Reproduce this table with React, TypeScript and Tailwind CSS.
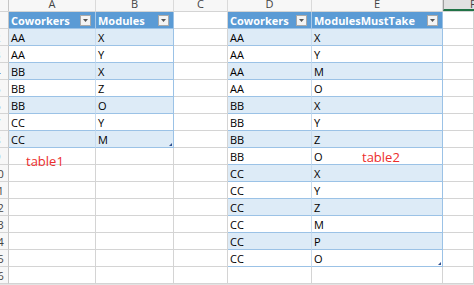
type Kind = 'hdr' | 'band' | 'plain' | 'empty';

interface Cell {
  text?: string;
  kind: Kind;
  last?: boolean; // right edge of a table
  corner?: boolean; // resize handle
}

const cols = ['A', 'B', 'C', 'D', 'E', 'F'];
const widths = ['w-[87px]', 'w-[78px]', 'w-[54px]', 'w-[84px]', 'w-[131px]', 'flex-1'];

const table1: [string, string][] = [
  ['AA', 'X'],
  ['AA', 'Y'],
  ['BB', 'X'],
  ['BB', 'Z'],
  ['BB', 'O'],
  ['CC', 'Y'],
  ['CC', 'M'],
];

const table2: [string, string][] = [
  ['AA', 'X'],
  ['AA', 'Y'],
  ['AA', 'M'],
  ['AA', 'O'],
  ['BB', 'X'],
  ['BB', 'Y'],
  ['BB', 'Z'],
  ['BB', 'O'],
  ['CC', 'X'],
  ['CC', 'Y'],
  ['CC', 'Z'],
  ['CC', 'M'],
  ['CC', 'P'],
  ['CC', 'O'],
];

function tableCells(rows: [string, string][], head: [string, string], r: number): Cell[] {
  if (r === 0) {
    return [
      { text: head[0], kind: 'hdr' },
      { text: head[1], kind: 'hdr', last: true },
    ];
  }
  const row = rows[r - 1];
  if (!row) return [{ kind: 'empty' }, { kind: 'empty' }];
  const kind: Kind = r % 2 === 1 ? 'band' : 'plain';
  const end = r === rows.length;
  return [
    { text: row[0], kind },
    { text: row[1], kind, last: true, corner: end },
  ];
}

function buildRow(r: number): Cell[] {
  return [
    ...tableCells(table1, ['Coworkers', 'Modules'], r),
    { kind: 'empty' },
    ...tableCells(table2, ['Coworkers', 'ModulesMustTake'], r),
    { kind: 'empty' },
  ];
}

function DropDown() {
  return (
    <span className="ml-auto mr-[4px] flex h-[11px] w-[11px] shrink-0 items-center justify-center border border-[#a9a9a9] bg-[#f4f4f4]">
      <svg width="5" height="3" viewBox="0 0 5 3">
        <path d="M0 0h5L2.5 3z" fill="#555" />
      </svg>
    </span>
  );
}

function GridCell({ cell, width }: { cell: Cell; width: string }) {
  let cls = 'border-b border-r border-[#d4d4d4] bg-white';
  if (cell.kind === 'hdr') {
    cls = `border-b border-b-[#9bc2e6] border-r ${cell.last ? 'border-r-[#9bc2e6]' : 'border-r-[#a9c9e8]'} bg-[#5b9bd5] font-bold text-white`;
  } else if (cell.kind === 'band' || cell.kind === 'plain') {
    cls = `border-b border-b-[#9bc2e6] border-r ${cell.last ? 'border-r-[#9bc2e6]' : 'border-r-[#c9dcef]'} ${cell.kind === 'band' ? 'bg-[#ddebf7]' : 'bg-white'} text-black`;
  }
  return (
    <div className={`relative flex h-[17px] shrink-0 items-center pl-[2px] pt-px ${width} ${cls}`}>
      {cell.text && <span className="whitespace-nowrap">{cell.text}</span>}
      {cell.kind === 'hdr' && <DropDown />}
      {cell.corner && (
        <svg className="absolute bottom-[1px] right-[1px]" width="3" height="3" viewBox="0 0 3 3">
          <path d="M3 0v3H0z" fill="#2f4f8f" />
        </svg>
      )}
    </div>
  );
}

export default function App() {
  const rows = Array.from({ length: 16 }, (_, i) => i);

  return (
    <div
      className="relative h-[285px] w-[474px] overflow-hidden bg-[#e3e3e3] text-[11px] leading-none"
      style={{ fontFamily: '"Open Sans", "Liberation Sans", sans-serif' }}
    >
      {/* column letters */}
      <div className="flex h-[12px] overflow-hidden border-b border-[#d4d4d4] bg-[#f7f7f7] text-[#444]">
        <div className="w-[9px] shrink-0 border-r border-[#c6c6c6]" />
        {cols.map((c, i) => (
          <div
            key={c}
            className={`flex shrink-0 justify-center border-r ${widths[i]} ${
              c === 'F' ? 'border-r-0 border-b-2 border-l border-b-[#217346] border-l-[#9f9f9f] bg-[#e1e1e1]' : 'border-[#dadada]'
            }`}
          >
            <span className={`-mt-[2px] ${c === 'F' ? 'pl-[26px]' : ''}`}>{c}</span>
          </div>
        ))}
      </div>

      {rows.map((r) => (
        <div key={r} className="flex">
          {/* row numbers, mostly scrolled out of view */}
          <div className="relative h-[17px] w-[9px] shrink-0 overflow-hidden border-b border-r border-b-[#d4d4d4] border-r-[#c6c6c6] bg-[#f7f7f7] text-[#444]">
            <div className="-ml-[13px] flex h-full w-[21px] items-center justify-center pt-px">{r + 1}</div>
          </div>
          {buildRow(r).map((cell, i) => (
            <GridCell key={i} cell={cell} width={widths[i]} />
          ))}
        </div>
      ))}

      {/* floating labels */}
      <span className="absolute left-[26px] top-[155px] text-[13px] text-[#ec2d2d]">table1</span>
      <span className="absolute left-[362px] top-[151px] text-[13px] text-[#ec2d2d]">table2</span>
    </div>
  );
}
